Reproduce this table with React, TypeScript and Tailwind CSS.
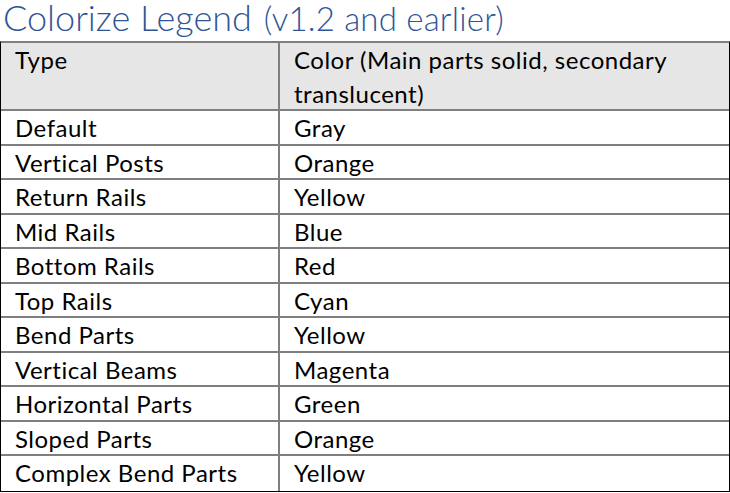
const rows: [string, string][] = [
  ['Default', 'Gray'],
  ['Vertical Posts', 'Orange'],
  ['Return Rails', 'Yellow'],
  ['Mid Rails', 'Blue'],
  ['Bottom Rails', 'Red'],
  ['Top Rails', 'Cyan'],
  ['Bend Parts', 'Yellow'],
  ['Vertical Beams', 'Magenta'],
  ['Horizontal Parts', 'Green'],
  ['Sloped Parts', 'Orange'],
  ['Complex Bend Parts', 'Yellow'],
];

export default function App() {
  return (
    <div className="w-[730px] h-[493px] bg-white overflow-hidden font-['Lato','Liberation_Sans',sans-serif] text-black">
      {/* Heading */}
      <h1 className="h-[41px] pl-[3px] pt-[3px] flex items-baseline text-[#2f5597] font-light leading-[29px]">
        <span className="text-[36px]">Colorize Legend</span>
        <span className="text-[33px] ml-[12px] tracking-[0.2px]">(v1.2 and earlier)</span>
      </h1>

      {/* Table */}
      <div className="w-[730px] border border-black border-t-[#7f7f7f] border-t-2 text-[24px] tracking-[0.5px]">
        <div className="flex bg-[#e7e6e6] h-[68px] border-b-2 border-[#7f7f7f]">
          <div className="w-[279px] pl-[14px] leading-[34px] border-r-2 border-[#7f7f7f]">
            Type
          </div>
          <div className="flex-1 pl-[14px] leading-[34px]">
            Color (Main parts solid, secondary translucent)
          </div>
        </div>
        {rows.map(([type, color], i) => (
          <div
            key={type}
            className={`flex h-[34.5px] ${i < rows.length - 1 ? 'border-b-2 border-[#7f7f7f]' : ''}`}
          >
            <div className="w-[279px] pl-[14px] leading-[33px] border-r-2 border-[#7f7f7f]">
              {type}
            </div>
            <div className="flex-1 pl-[14px] leading-[33px]">{color}</div>
          </div>
        ))}
      </div>
    </div>
  );
}
